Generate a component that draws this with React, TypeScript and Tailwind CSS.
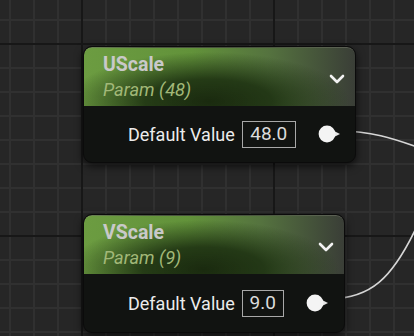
import React from "react";

interface ParamNodeProps {
  title: string;
  subtitle: string;
  value: string;
  className: string;
  boxWidth: string;
}

const Chevron = () => (
  <svg width="16" height="10" viewBox="0 0 16 10" className="block">
    <path d="M2 2 L8 8 L14 2" fill="none" stroke="#f2f2f2" strokeWidth="2.6" strokeLinecap="round" strokeLinejoin="round" />
  </svg>
);

const Pin = () => (
  <svg width="24" height="18" viewBox="0 0 24 18" className="block">
    <polygon points="14,5 22,9 14,13" fill="#e6e6e6" />
    <circle cx="9" cy="9" r="8.4" fill="#f4f4f4" />
  </svg>
);

function ParamNode({ title, subtitle, value, className, boxWidth }: ParamNodeProps) {
  return (
    <div
      className={`absolute flex flex-col rounded-[9px] border border-[#0b0b0b] bg-[#111311] shadow-[0_3px_8px_rgba(0,0,0,0.7)] overflow-hidden ${className}`}
    >
      <div
        className="relative h-[59px] flex items-center pl-[19px] pr-[10px] rounded-t-[8px] border-t border-[#8a8a80]/40
                   bg-[radial-gradient(ellipse_52%_85%_at_46%_92%,rgba(26,42,15,1)_0%,rgba(30,50,18,0.9)_45%,rgba(30,50,18,0)_100%),linear-gradient(to_right,#6c9c41_0%,#62923a_40%,#55733f_68%,#3a3e37_100%)]"
      >
        <div className="flex-1 flex flex-col leading-none">
          <span className="text-[19.5px] font-bold text-[#c9c9c9] font-['Roboto',sans-serif]">{title}</span>
          <span className="mt-[7px] text-[18.3px] italic text-[#a2b878] font-['Roboto',sans-serif]">{subtitle}</span>
        </div>
        <div className="mt-[3px]">
          <Chevron />
        </div>
      </div>
      <div className="flex-1 flex items-center pl-[44px]">
        <span className="text-[18px] text-[#ececec] font-['Roboto',sans-serif]">Default Value</span>
        <div
          className={`ml-[7px] h-[27px] ${boxWidth} border border-[#a8a8a8] flex items-center justify-center text-[19px] text-[#dcdcdc] font-['Roboto',sans-serif]`}
        >
          {value}
        </div>
        <div className="ml-[22px] mt-[-1px]">
          <Pin />
        </div>
      </div>
    </div>
  );
}

export default function App() {
  return (
    <div
      className="relative w-[414px] h-[336px] overflow-hidden bg-[#262626]
                 bg-[linear-gradient(to_right,#171717_2px,transparent_2px),linear-gradient(to_bottom,#171717_2px,transparent_2px),linear-gradient(to_right,#303030_2px,transparent_2px),linear-gradient(to_bottom,#303030_2px,transparent_2px)]
                 bg-size-[192px_192px,192px_192px,24px_24px,24px_24px]
                 bg-position-[81px_43px,81px_43px,9px_19px,9px_19px]"
    >
      <svg className="absolute inset-0" width="414" height="336" viewBox="0 0 414 336">
        <path d="M340 131 C 370 131, 392 138, 420 148" fill="none" stroke="#d6d6d6" strokeWidth="1.6" />
        <path d="M330 299 C 370 298, 392 280, 418 224" fill="none" stroke="#d6d6d6" strokeWidth="1.6" />
      </svg>
      <ParamNode
        title="UScale"
        subtitle="Param (48)"
        value="48.0"
        className="left-[83px] top-[46px] w-[273px] h-[117px]"
        boxWidth="w-[54px]"
      />
      <ParamNode
        title="VScale"
        subtitle="Param (9)"
        value="9.0"
        className="left-[83px] top-[214px] w-[262px] h-[119px]"
        boxWidth="w-[42px]"
      />
    </div>
  );
}
